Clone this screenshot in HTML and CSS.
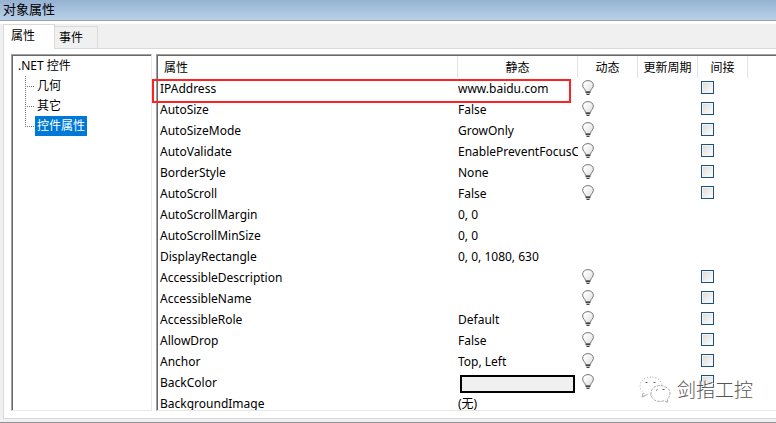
FILE: index.html
```html
<!DOCTYPE html>
<html lang="zh-CN">
<head>
<meta charset="utf-8">
<title>对象属性</title>
<link rel="stylesheet" href="styles.css">
</head>
<body>
<svg class="defs" aria-hidden="true">
  <defs>
    <linearGradient id="glass" x1="0" y1="0" x2="1" y2="1"><stop offset="0.2" stop-color="#fff"/><stop offset="1" stop-color="#ddd"/></linearGradient>
    <symbol id="bulb" viewBox="0 0 12 16">
      <path d="M3.500 11.500C3.500 9 .6 8 .6 5.200.6 2.400 3 .6 6 .6s5.400 1.800 5.400 4.600C11.400 8 8.500 9 8.500 11.500z" fill="url(#glass)" stroke="#777"/>
      <path d="M4 12h4v1.500l-1 1H5l-1-1z" fill="#bbb"/>
      <path d="M3.500 12.500h5M4.500 14.500h3" stroke="#444" fill="none"/>
    </symbol>
  </defs>
</svg>
<main class="window">
  <h1 class="title">对象属性</h1>
  <div class="tabs" role="tablist">
    <button class="tab active" role="tab" aria-selected="true">属性</button>
    <button class="tab" role="tab" aria-selected="false">事件</button>
  </div>
  <div class="pane" role="tabpanel">
    <nav class="panel tree">
      <span class="root">.NET 控件</span>
      <ul>
        <li><a href="#geometry">几何</a></li>
        <li><a href="#other">其它</a></li>
        <li><a href="#control" class="selected">控件属性</a></li>
      </ul>
    </nav>
    <section class="panel grid">
      <table>
        <colgroup><col class="c-name"><col class="c-static"><col class="c-small"><col class="c-small"><col class="c-link"><col></colgroup>
        <thead><tr><th>属性</th><th>静态</th><th>动态</th><th>更新周期</th><th>间接</th><td></td></tr></thead>
        <tbody>
          <tr><td>IPAddress</td><td>www.baidu.com</td><td><button class="bulb" aria-label="动态"><svg><use href="#bulb"/></svg></button></td><td></td><td><input type="checkbox" aria-label="间接"></td><td></td></tr>
          <tr><td>AutoSize</td><td>False</td><td><button class="bulb" aria-label="动态"><svg><use href="#bulb"/></svg></button></td><td></td><td><input type="checkbox" aria-label="间接"></td><td></td></tr>
          <tr><td>AutoSizeMode</td><td>GrowOnly</td><td><button class="bulb" aria-label="动态"><svg><use href="#bulb"/></svg></button></td><td></td><td><input type="checkbox" aria-label="间接"></td><td></td></tr>
          <tr><td>AutoValidate</td><td>EnablePreventFocusChange</td><td><button class="bulb" aria-label="动态"><svg><use href="#bulb"/></svg></button></td><td></td><td><input type="checkbox" aria-label="间接"></td><td></td></tr>
          <tr><td>BorderStyle</td><td>None</td><td><button class="bulb" aria-label="动态"><svg><use href="#bulb"/></svg></button></td><td></td><td><input type="checkbox" aria-label="间接"></td><td></td></tr>
          <tr><td>AutoScroll</td><td>False</td><td><button class="bulb" aria-label="动态"><svg><use href="#bulb"/></svg></button></td><td></td><td><input type="checkbox" aria-label="间接"></td><td></td></tr>
          <tr><td>AutoScrollMargin</td><td>0, 0</td><td></td><td></td><td></td><td></td></tr>
          <tr><td>AutoScrollMinSize</td><td>0, 0</td><td></td><td></td><td></td><td></td></tr>
          <tr><td>DisplayRectangle</td><td>0, 0, 1080, 630</td><td></td><td></td><td></td><td></td></tr>
          <tr><td>AccessibleDescription</td><td></td><td><button class="bulb" aria-label="动态"><svg><use href="#bulb"/></svg></button></td><td></td><td><input type="checkbox" aria-label="间接"></td><td></td></tr>
          <tr><td>AccessibleName</td><td></td><td><button class="bulb" aria-label="动态"><svg><use href="#bulb"/></svg></button></td><td></td><td><input type="checkbox" aria-label="间接"></td><td></td></tr>
          <tr><td>AccessibleRole</td><td>Default</td><td><button class="bulb" aria-label="动态"><svg><use href="#bulb"/></svg></button></td><td></td><td><input type="checkbox" aria-label="间接"></td><td></td></tr>
          <tr><td>AllowDrop</td><td>False</td><td><button class="bulb" aria-label="动态"><svg><use href="#bulb"/></svg></button></td><td></td><td><input type="checkbox" aria-label="间接"></td><td></td></tr>
          <tr><td>Anchor</td><td>Top, Left</td><td><button class="bulb" aria-label="动态"><svg><use href="#bulb"/></svg></button></td><td></td><td><input type="checkbox" aria-label="间接"></td><td></td></tr>
          <tr><td>BackColor</td><td><button class="swatch" aria-label="BackColor"></button></td><td><button class="bulb" aria-label="动态"><svg><use href="#bulb"/></svg></button></td><td></td><td><input type="checkbox" aria-label="间接"></td><td></td></tr>
          <tr><td>BackgroundImage</td><td>(无)</td><td></td><td></td><td></td><td></td></tr>
        </tbody>
      </table>
    </section>
    <div class="marker"></div>
    <div class="watermark">
      <svg viewBox="0 0 32 28" aria-hidden="true">
        <g fill="#fff" stroke="#999" stroke-width="0.800">
          <path stroke-dasharray="1 2" d="M12 1C5.500 1 1 5 1 10c0 3 1.500 5.200 4 7l-1 4 4.500-2.500c1 .3 2.300.5 3.500.5 6.500 0 11-4 11-9s-4.500-9-11-9z"/>
          <path stroke-dasharray="3 1" d="M21 9.500c-5.500 0-9 3.500-9 8s3.500 8 9 8c1.500 0 3-.3 4.200-.8l3.800 2-.8-3.500c1.800-1.500 2.800-3.500 2.800-5.700 0-4.500-4.500-8-10-8z"/>
          <path d="M4 17l-1 4 5-2.500" fill="none"/>
        </g>
        <path d="M6.500 6.500h2M14.500 6.500h2M17 14.500l1.500-1M23.500 13.500h2" fill="none" stroke="#666"/>
      </svg>
      <span>剑指工控</span>
    </div>
  </div>
</main>
</body>
</html>
```
FILE: styles.css
```css
* { box-sizing: border-box; }

body {
  margin: 0;
  background: #f0f0f0;
  color: #000;
  font: 12px/20px "Noto Sans", "Noto Sans CJK SC", sans-serif;
}

button, input { font: inherit; color: inherit; margin: 0; }

.defs { position: absolute; width: 0; height: 0; }

.window {
  display: flex;
  flex-direction: column;
  height: 100vh;
  padding-bottom: 3px;
  border-bottom: 1px solid #909096;
}

.title {
  flex: none;
  margin: 0 0 3px;
  padding: 0 0 2px 3px;
  font-size: 13px;
  font-weight: 400;
  line-height: 18px;
  background: linear-gradient(#96b1d1, #b9d1ea);
  border-bottom: 1px solid #a0a0a0;
  box-shadow: 0 3px #fff;
}

.tabs {
  display: flex;
  align-items: flex-end;
  flex: none;
  margin-left: 3px;
}

.tab {
  height: 22px;
  padding: 0 14px 0 4px;
  line-height: 20px;
  border: 1px solid #d9d9d9;
  border-width: 1px 1px 0 0;
  background: #f0f0f0;
}

.tab.active {
  z-index: 1;
  height: 25px;
  margin-bottom: -1px;
  padding: 0 19px 2px 7px;
  border-width: 1px 1px 0 1px;
  background: #fff;
}

.pane {
  position: relative;
  display: flex;
  flex: 1;
  gap: 4px;
  min-height: 0;
  margin-left: 3px;
  padding: 5px 0 7px 7px;
  background: #fff;
  border: 1px solid #d9d9d9;
  border-right: 0;
}

.panel {
  overflow: hidden;
  background: #fff;
  border: 1px solid #a0a0a0;
  border-color: #a0a0a0 #e8e8e8 #e8e8e8 #a0a0a0;
  box-shadow: inset 1px 1px #696969;
}

.tree { flex: none; width: 141px; padding: 1px 0 0 6px; }
.root { display: block; }
.tree ul { margin: 0 0 0 7px; padding: 0; list-style: none; }

.tree li {
  display: flex;
  align-items: center;
  height: 20px;
  background:
    repeating-linear-gradient(#808080 0 1px, transparent 1px 2px) 0 0 / 1px 100% no-repeat,
    repeating-linear-gradient(90deg, #808080 0 1px, transparent 1px 2px) 0 50% / 9px 1px no-repeat;
}

.tree li:last-child {
  background-size: 1px 50%, 9px 1px;
}

.tree a {
  margin-left: 10px;
  padding: 0 2px;
  color: inherit;
  text-decoration: none;
}

.tree a.selected { background: #0078d7; color: #fff; }

.grid {
  flex: 1;
  min-width: 0;
  padding: 1px 0 0 1px;
  border-right: 0;
}

table { width: 100%; table-layout: fixed; border-collapse: separate; border-spacing: 0; }
.c-name { width: 300px; }
.c-static { width: 120px; }
.c-small { width: 60px; }
.c-link { width: 50px; }

th {
  height: 22px;
  padding: 2px 0 0;
  font-weight: 400;
  line-height: 20px;
  border-right: 1px solid #e3e3e3;
}

th:first-child { padding-left: 6px; text-align: left; }

tbody td {
  height: 21px;
  padding: 0;
  line-height: 21px;
  overflow: hidden;
  white-space: nowrap;
  vertical-align: top;
}

tbody td:first-child { padding-left: 2px; }
tbody td:nth-child(3) { padding-left: 4px; }
tbody td:nth-child(5) { padding-left: 3px; }

.bulb {
  display: block;
  width: 12px;
  height: 16px;
  margin-top: 2px;
  padding: 0;
  border: 0;
  background: none;
}

.bulb svg { display: block; width: 12px; height: 16px; }

input[type="checkbox"] {
  appearance: none;
  display: block;
  width: 13px;
  height: 13px;
  margin-top: 3px;
  border: 1px solid #1c5180;
  background: linear-gradient(135deg, #d9d9d5, #fff);
  box-shadow: inset 0 0 0 1px #f4f4f4;
}

.swatch {
  display: block;
  width: 115px;
  height: 18px;
  margin: 3px 0 0 2px;
  padding: 0;
  border: 2px solid #000;
  background: #f0f0f0;
}

.marker {
  position: absolute;
  left: 148px;
  top: 30px;
  width: 419px;
  height: 24px;
  border: 2px solid #f22;
}

.watermark {
  position: absolute;
  right: 23px;
  bottom: 14px;
  display: flex;
  align-items: center;
  gap: 6px;
  color: #555;
  font-size: 19px;
  font-weight: 300;
  line-height: 28px;
}

.watermark svg { width: 32px; height: 28px; }
.watermark span { text-shadow: 0 0 1px #fff, 1px 1px #fff; }
```
